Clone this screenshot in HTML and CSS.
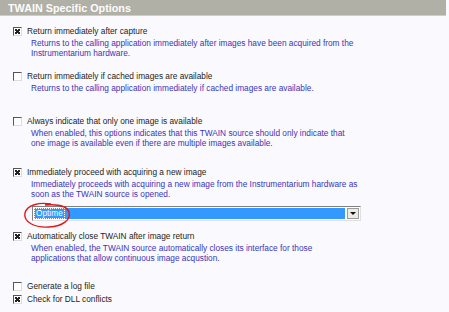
FILE: index.html
```html
<!DOCTYPE html>
<html>
<head>
<meta charset="utf-8">
<link rel="stylesheet" href="styles.css">
</head>
<body>
<div class="header">TWAIN Specific Options</div>
<div class="content">
  <div class="option o1">
    <div class="row"><span class="cb checked"></span><span class="label">Return immediately after capture</span></div>
    <div class="desc">Returns to the calling application immediately after images have been acquired from the<br>Instrumentarium hardware.</div>
  </div>
  <div class="option o2">
    <div class="row"><span class="cb"></span><span class="label">Return immediately if cached images are available</span></div>
    <div class="desc">Returns to the calling application immediately if cached images are available.</div>
  </div>
  <div class="option o3">
    <div class="row"><span class="cb"></span><span class="label">Always indicate that only one image is available</span></div>
    <div class="desc">When enabled, this options indicates that this TWAIN source should only indicate that<br>one image is available even if there are multiple images available.</div>
  </div>
  <div class="option o4">
    <div class="row"><span class="cb checked"></span><span class="label">Immediately proceed with acquiring a new image</span></div>
    <div class="desc">Immediately proceeds with acquiring a new image from the Instrumentarium hardware as<br>soon as the TWAIN source is opened.</div>
    <div class="select">
      <div class="field"><span class="value">Optime</span></div>
      <div class="btn"><span class="arrow"></span></div>
      <svg class="circle" width="56" height="30" viewBox="0 0 56 30"><path d="M30 3 C18 1 6 4 4 12 C2 21 14 27 28 26 C42 25 50 19 48 11 C46 5 36 3 24 4" fill="none" stroke="#e01818" stroke-width="1.4"/></svg>
    </div>
  </div>
  <div class="option o5">
    <div class="row"><span class="cb checked"></span><span class="label">Automatically close TWAIN after image return</span></div>
    <div class="desc">When enabled, the TWAIN source automatically closes its interface for those<br>applications that allow continuous image acqustion.</div>
  </div>
  <div class="option o6">
    <div class="row"><span class="cb"></span><span class="label">Generate a log file</span></div>
  </div>
  <div class="option o7">
    <div class="row"><span class="cb checked"></span><span class="label">Check for DLL conflicts</span></div>
  </div>
</div>
</body>
</html>
```

FILE: styles.css
```css
html, body {
  margin: 0;
  padding: 0;
  background: #fafafe;
  width: 449px;
  height: 312px;
  overflow: hidden;
  font-family: "Liberation Sans", Arial, sans-serif;
}
.header {
  width: 446px;
  height: 16px;
  background: #b1b0a6;
  border-bottom: 1px solid #c9c9ee;
  color: #fcfcfc;
  font-weight: bold;
  font-size: 10.8px;
  line-height: 16px;
  padding-left: 8px;
  box-sizing: border-box;
}
.content {
  padding-left: 13px;
}
.row {
  display: flex;
  align-items: center;
  height: 11px;
}
.label {
  font-size: 8.3px;
  line-height: 11px;
  color: #1c1c1c;
  margin-left: 5px;
  white-space: nowrap;
}
.cb {
  width: 9px;
  height: 9px;
  box-sizing: border-box;
  border-top: 1px solid #555;
  border-left: 1px solid #555;
  border-right: 1px solid #ddd;
  border-bottom: 1px solid #ddd;
  background: #fff;
  position: relative;
  flex: none;
}
.cb.checked::after {
  content: "";
  position: absolute;
  left: 1px;
  top: 1px;
  width: 5px;
  height: 5px;
  background:
    linear-gradient(45deg, transparent 35%, #222 35%, #222 65%, transparent 65%),
    linear-gradient(-45deg, transparent 35%, #222 35%, #222 65%, transparent 65%);
}
.desc {
  font-size: 8.3px;
  line-height: 10px;
  color: #3a34b8;
  margin-top: 1px;
  margin-left: 18px;
  white-space: nowrap;
}
.o1 { margin-top: 10px; }
.o2 { margin-top: 13px; }
.o3 { margin-top: 23px; }
.o4 { margin-top: 19px; }
.o5 { margin-top: 10px; }
.o6 { margin-top: 18px; }
.o7 { margin-top: 2px; }
.select {
  position: relative;
  margin-top: 7px;
  margin-left: 19px;
  width: 329px;
  height: 15px;
  box-sizing: border-box;
  border-top: 1px solid #808080;
  border-left: 1px solid #808080;
  border-right: 1px solid #e0e0e0;
  border-bottom: 1px solid #e0e0e0;
  background: #ffffff;
  display: flex;
  padding: 1px;
  gap: 2px;
}
.field {
  flex: 1;
  background: #3399ff;
  display: flex;
  align-items: center;
}
.value {
  color: #ffffff;
  font-size: 8.3px;
  line-height: 9px;
  padding: 0 1px;
  outline: 1px dotted #ffffff;
  margin-left: 1px;
}
.btn {
  width: 12px;
  background: #ecebe6;
  border: 1px solid #9a9a9a;
  box-sizing: border-box;
  display: flex;
  align-items: center;
  justify-content: center;
}
.arrow {
  width: 0;
  height: 0;
  border-left: 3px solid transparent;
  border-right: 3px solid transparent;
  border-top: 3px solid #111;
}
.circle {
  position: absolute;
  left: -12px;
  top: -6px;
}
```
